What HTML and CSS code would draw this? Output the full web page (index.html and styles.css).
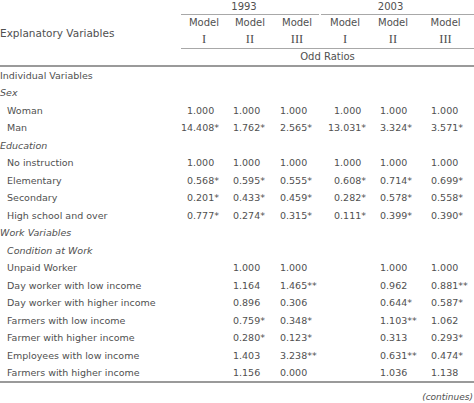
FILE: index.html
```html
<!DOCTYPE html>
<html>
<head>
<meta charset="utf-8">
<link rel="stylesheet" href="styles.css">
</head>
<body>
<div class="page">
<table class="t">
  <colgroup>
    <col class="c-label"><col class="c-46"><col class="c-46"><col class="c-48"><col class="c-48"><col class="c-48"><col class="c-57">
  </colgroup>
  <thead>
    <tr class="h-year">
      <th class="h-expl" rowspan="3">Explanatory Variables</th>
      <th colspan="3" class="year"><div class="year-in y93">1993</div></th>
      <th colspan="3" class="year"><div class="year-in y03">2003</div></th>
    </tr>
    <tr class="h-model">
      <th>Model<br><span class="rn">I</span></th>
      <th>Model<br><span class="rn">II</span></th>
      <th>Model<br><span class="rn">III</span></th>
      <th>Model<br><span class="rn">I</span></th>
      <th>Model<br><span class="rn">II</span></th>
      <th>Model<br><span class="rn">III</span></th>
    </tr>
    <tr class="h-odd">
      <th colspan="6">Odd Ratios</th>
    </tr>
  </thead>
  <tbody>
    <tr class="first"><td class="lab">Individual Variables</td><td></td><td></td><td></td><td></td><td></td><td></td></tr>
    <tr><td class="lab it">Sex</td><td></td><td></td><td></td><td></td><td></td><td></td></tr>
    <tr><td class="lab sub">Woman</td><td>1.000</td><td>1.000</td><td>1.000</td><td>1.000</td><td>1.000</td><td>1.000</td></tr>
    <tr><td class="lab sub">Man</td><td class="w">14.408*</td><td>1.762*</td><td>2.565*</td><td class="w">13.031*</td><td>3.324*</td><td>3.571*</td></tr>
    <tr><td class="lab it">Education</td><td></td><td></td><td></td><td></td><td></td><td></td></tr>
    <tr><td class="lab sub">No instruction</td><td>1.000</td><td>1.000</td><td>1.000</td><td>1.000</td><td>1.000</td><td>1.000</td></tr>
    <tr><td class="lab sub">Elementary</td><td>0.568*</td><td>0.595*</td><td>0.555*</td><td>0.608*</td><td>0.714*</td><td>0.699*</td></tr>
    <tr><td class="lab sub">Secondary</td><td>0.201*</td><td>0.433*</td><td>0.459*</td><td>0.282*</td><td>0.578*</td><td>0.558*</td></tr>
    <tr><td class="lab sub">High school and over</td><td>0.777*</td><td>0.274*</td><td>0.315*</td><td>0.111*</td><td>0.399*</td><td>0.390*</td></tr>
    <tr><td class="lab it">Work Variables</td><td></td><td></td><td></td><td></td><td></td><td></td></tr>
    <tr><td class="lab sub it">Condition at Work</td><td></td><td></td><td></td><td></td><td></td><td></td></tr>
    <tr><td class="lab sub">Unpaid Worker</td><td></td><td>1.000</td><td>1.000</td><td></td><td>1.000</td><td>1.000</td></tr>
    <tr><td class="lab sub">Day worker with low income</td><td></td><td>1.164</td><td>1.465**</td><td></td><td>0.962</td><td>0.881**</td></tr>
    <tr><td class="lab sub">Day worker with higher income</td><td></td><td>0.896</td><td>0.306</td><td></td><td>0.644*</td><td>0.587*</td></tr>
    <tr><td class="lab sub">Farmers with low income</td><td></td><td>0.759*</td><td>0.348*</td><td></td><td>1.103**</td><td>1.062</td></tr>
    <tr><td class="lab sub">Farmer with higher income</td><td></td><td>0.280*</td><td>0.123*</td><td></td><td>0.313</td><td>0.293*</td></tr>
    <tr><td class="lab sub">Employees with low income</td><td></td><td>1.403</td><td>3.238**</td><td></td><td>0.631**</td><td>0.474*</td></tr>
    <tr class="last"><td class="lab sub">Farmers with higher income</td><td></td><td>1.156</td><td>0.000</td><td></td><td>1.036</td><td>1.138</td></tr>
  </tbody>
</table>
<div class="cont">(continues)</div>
</div>
</body>
</html>
```

FILE: styles.css
```css
html, body {
  margin: 0;
  padding: 0;
  background: #ffffff;
}
.page {
  width: 474px;
  height: 403px;
  overflow: hidden;
  font-family: "DejaVu Sans", Verdana, sans-serif;
  color: #505050;
}
.t {
  width: 474px;
  table-layout: fixed;
  border-collapse: collapse;
  border-spacing: 0;
  font-size: 9.5px;
}
.c-label { width: 181px; }
.c-46 { width: 46px; }
.c-48 { width: 48px; }
.c-57 { width: 57px; }

.t th {
  font-weight: normal;
  padding: 0;
  text-align: center;
  font-size: 10px;
}
.h-expl {
  text-align: left !important;
  vertical-align: middle;
  font-size: 10.5px !important;
  padding-top: 0;
  border-bottom: 2px solid #9a9a9a;
}
.h-year th.year {
  height: 15px;
  line-height: 15px;
  vertical-align: top;
}
.year-in {
  height: 14px;
  line-height: 14px;
  border-bottom: 1px solid #a8a8a8;
}
.y93 { margin-right: 2px; padding-right: 12px; }
.y03 { padding-right: 14px; }
.h-model th {
  height: 32px;
  line-height: 16px;
  border-bottom: 1px solid #a8a8a8;
  vertical-align: top;
  padding-top: 0;
}
.rn {
  font-family: "Liberation Serif", "Times New Roman", serif;
  font-size: 12.5px;
}
.h-odd th {
  height: 16px;
  line-height: 16px;
  border-bottom: 2px solid #9a9a9a;
}
.t td {
  height: 17.47px;
  padding: 0;
  line-height: 17.47px;
  white-space: nowrap;
  vertical-align: middle;
}
.t td:nth-child(2) { padding-left: 6px; }
.t td:nth-child(3) { padding-left: 6px; }
.t td:nth-child(4) { padding-left: 7px; }
.t td:nth-child(5) { padding-left: 13px; }
.t td:nth-child(6) { padding-left: 11px; }
.t td:nth-child(7) { padding-left: 14px; }
.t td.w { text-indent: -6px; }
.t td.lab { padding-left: 0; }
.t td.sub { padding-left: 7px; }
.it { font-style: italic; }
.last td { border-bottom: 2px solid #9a9a9a; }
.cont {
  text-align: right;
  font-style: italic;
  font-size: 9px;
  margin-top: 9px;
  margin-right: 1px;
}
```
